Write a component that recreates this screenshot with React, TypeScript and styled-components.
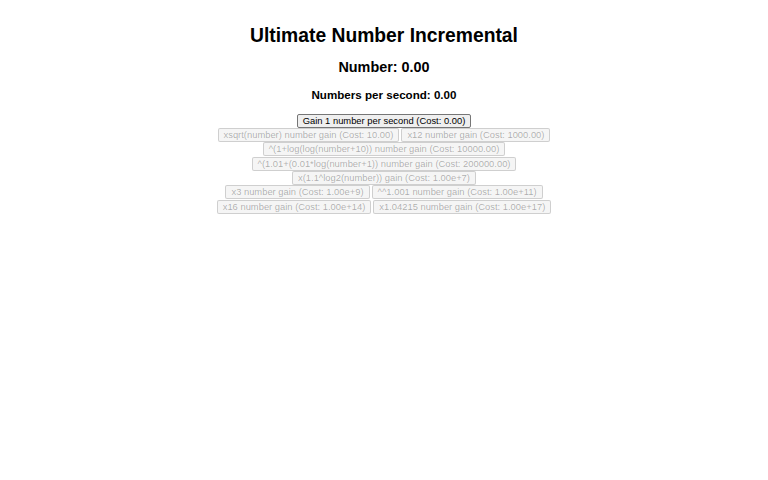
import React from "react"
import styled, { createGlobalStyle } from "styled-components"

const GlobalStyle = createGlobalStyle`
	body {
		margin: 8px;
		background: #ffffff;
		font-family: "Liberation Sans", Arial, sans-serif;
		color: #000000;
	}
`

type Upgrade = {
	label: string
	enabled?: boolean
}

// each inner array is one line of buttons
const upgradeRows: Upgrade[][] = [
	[{ label: "Gain 1 number per second (Cost: 0.00)", enabled: true }],
	[
		{ label: "xsqrt(number) number gain (Cost: 10.00)" },
		{ label: "x12 number gain (Cost: 1000.00)" },
	],
	[{ label: "^(1+log(log(number+10)) number gain (Cost: 10000.00)" }],
	[{ label: "^(1.01+(0.01*log(number+1)) number gain (Cost: 200000.00)" }],
	[{ label: "x(1.1^log2(number)) gain (Cost: 1.00e+7)" }],
	[
		{ label: "x3 number gain (Cost: 1.00e+9)" },
		{ label: "^^1.001 number gain (Cost: 1.00e+11)" },
	],
	[
		{ label: "x16 number gain (Cost: 1.00e+14)" },
		{ label: "x1.04215 number gain (Cost: 1.00e+17)" },
	],
]

const App: React.FC = () => {
	return (
		<>
			<GlobalStyle />
			<Page>
				<Title>Ultimate Number Incremental</Title>
				<NumberHeading>Number: 0.00</NumberHeading>
				<RateHeading>Numbers per second: 0.00</RateHeading>
				<Upgrades>
					{upgradeRows.map((row, i) => (
						<UpgradeRow key={i}>
							{row.map((u) => (
								<UpgradeButton key={u.label} disabled={!u.enabled}>
									{u.label}
								</UpgradeButton>
							))}
						</UpgradeRow>
					))}
				</Upgrades>
			</Page>
		</>
	)
}

export default App

const Page = styled.div`
	display: flex;
	flex-direction: column;
	align-items: center;
	text-align: center;
`

const Title = styled.h1`
	font-size: 19.3px;
	line-height: 23px;
	font-weight: bold;
	margin: 16px 0 0;
`

const NumberHeading = styled.h2`
	font-size: 14.4px;
	line-height: 17px;
	font-weight: bold;
	margin: 12px 0 0;
`

const RateHeading = styled.h3`
	font-size: 11.6px;
	line-height: 13px;
	font-weight: bold;
	margin: 11.5px 0 0;
`

const Upgrades = styled.div`
	display: flex;
	flex-direction: column;
	gap: 0.4px;
	margin-top: 13px;
`

const UpgradeRow = styled.div`
	display: flex;
	justify-content: center;
	gap: 2px;
`

const UpgradeButton = styled.button`
	font-family: "Liberation Sans", Arial, sans-serif;
	font-size: 9.4px;
	line-height: 12px;
	height: 14px;
	padding: 0 5px;
	border: 1px solid #767676;
	border-radius: 2px;
	background: #efefef;
	color: #000000;

	&:disabled {
		border-color: rgba(118, 118, 118, 0.3);
		background: rgba(239, 239, 239, 0.6);
		color: rgba(16, 16, 16, 0.32);
	}
`
